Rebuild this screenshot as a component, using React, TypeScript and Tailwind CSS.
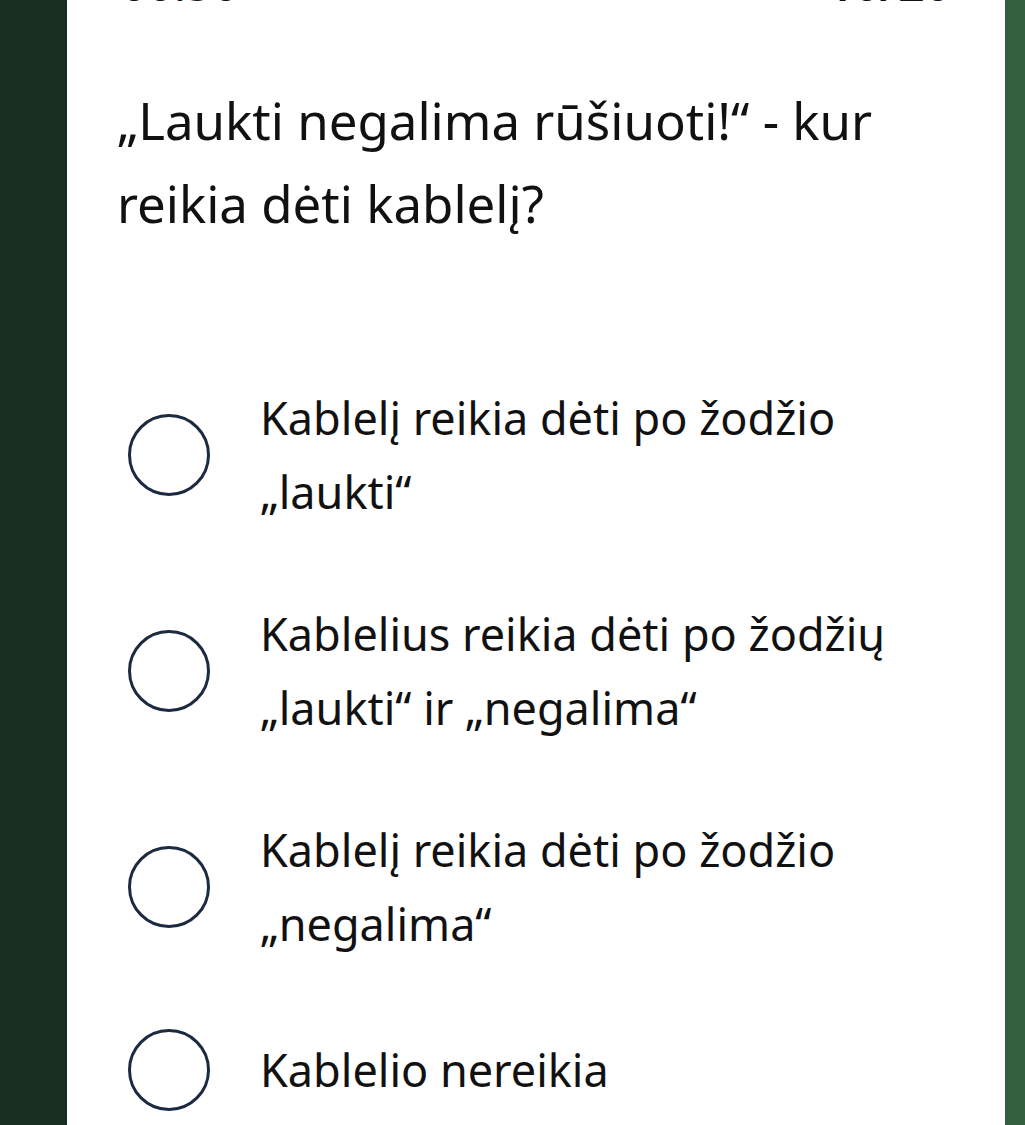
const options = [
  'Kablelį reikia dėti po žodžio „laukti“',
  'Kablelius reikia dėti po žodžių „laukti“ ir „negalima“',
  'Kablelį reikia dėti po žodžio „negalima“',
  'Kablelio nereikia',
]

function Option({ label }: { label: string }) {
  return (
    <div className="flex min-h-[82px] items-center gap-[50px] pl-[61px]">
      <span className="h-[82px] w-[82px] shrink-0 rounded-full border-[3px] border-[#1b2a40]" />
      <span className="max-w-[690px] text-[45px] leading-[74px] text-[#111]">{label}</span>
    </div>
  )
}

export default function App() {
  return (
    <div
      className="flex h-[1125px] overflow-hidden bg-white"
      style={{ fontFamily: '"Noto Sans", Lato, sans-serif' }}
    >
      <div className="w-[67px] shrink-0 bg-[#182e20]" />
      <main className="flex-1 bg-white">
        {/* header, scrolled mostly out of view */}
        <div className="-mt-[40px] flex items-end justify-between px-[54px] text-[46px] font-semibold leading-none text-[#111]">
          <span>00:50</span>
          <span>10/20</span>
        </div>

        <h1 className="mt-[73px] max-w-[860px] pl-[50px] text-[51px] leading-[83px] text-[#111]">
          „Laukti negalima rūšiuoti!“ - kur reikia dėti kablelį?
        </h1>

        <div className="mt-[136px] flex flex-col gap-[68px]">
          {options.map((o) => (
            <Option key={o} label={o} />
          ))}
        </div>
      </main>
      <div className="w-[20px] shrink-0 bg-[#35603f]" />
    </div>
  )
}
